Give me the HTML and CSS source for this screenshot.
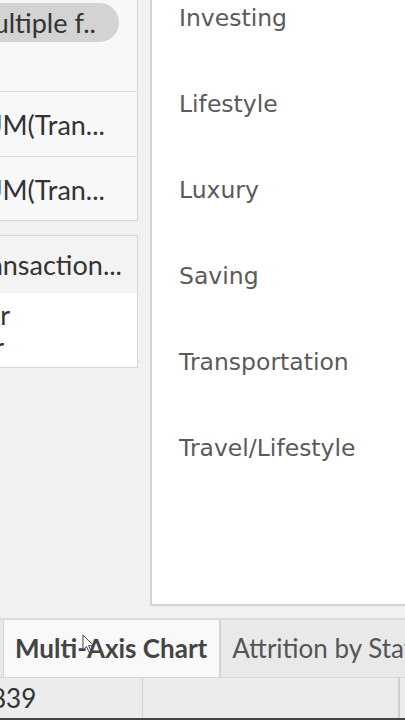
FILE: index.html
```html
<!DOCTYPE html>
<html lang="en">
<head>
    <meta charset="UTF-8">
    <meta name="viewport" content="width=device-width, initial-scale=1.0">
    <title>Multi-Axis Chart</title>
    <link rel="stylesheet" href="styles.css">
</head>
<body>
<!-- ZONA PRINCIPAL -->
<div class="principal">
    <!-- TARJETAS DE LA IZQUIERDA (marcas) -->
    <div class="lateral">
        <div class="tarjeta marcas">
            <div class="fila-pill">
                <span class="pill">Multiple f..</span>
            </div>
            <div class="fila">SUM(Tran...</div>
            <div class="fila ultima">SUM(Tran...</div>
        </div>

        <div class="tarjeta leyenda">
            <div class="cabecera">Transaction...</div>
            <div class="cuerpo">
                <span>Other</span>
                <span class="corta">Other</span>
            </div>
        </div>
    </div>

    <!-- VISTA -->
    <div class="vista">
        <ul class="categorias">
            <li>Investing</li>
            <li>Lifestyle</li>
            <li>Luxury</li>
            <li>Saving</li>
            <li>Transportation</li>
            <li>Travel/Lifestyle</li>
        </ul>
    </div>
</div>

<!-- PESTAÑAS -->
<div class="pestanas">
    <div class="pestana activa">Multi-Axis Chart</div>
    <div class="pestana">Attrition by State</div>
    <svg class="cursor" width="14" height="20" viewBox="0 0 14 20">
        <path d="M1 1 L1 16 L4.5 12.5 L7 18 L9 17 L6.6 11.6 L11.5 11.6 Z" fill="#fff" stroke="#444" stroke-width="1"/>
    </svg>
</div>

<!-- BARRA DE ESTADO -->
<div class="estado">
    <div class="celda primera">1,839</div>
    <div class="celda segunda"></div>
    <div class="celda"></div>
</div>
</body>
</html>
```
FILE: styles.css
```css
body{
    margin: 0;
    width: 405px;
    height: 720px;
    overflow: hidden;
    background-color: #f1f1f1;
    font-family: "Lato", "Liberation Sans", sans-serif;
    color: #333;
}

.principal{
    display: flex;
    height: 618px;
}

/* tarjetas izquierda */
.lateral{
    width: 220px;
    margin-left: -82px;
    display: flex;
    flex-direction: column;
    row-gap: 14px;
    flex-shrink: 0;
}

.tarjeta{
    background-color: #f8f8f8;
    border: 1px solid #d6d6d6;
    border-top: none;
    font-size: 27px;
    text-align: right;
    white-space: nowrap;
}

.marcas{
    height: 220px;
    display: flex;
    flex-direction: column;
}

.fila-pill{
    height: 92px;
    border-bottom: 1px solid #dcdcdc;
    box-sizing: border-box;
    padding-top: 3px;
    padding-right: 19px;
}

.pill{
    display: inline-block;
    width: 200px;
    height: 39px;
    line-height: 39px;
    padding-right: 23px;
    box-sizing: border-box;
    background-color: #d3d3d3;
    border-radius: 20px;
    color: #333;
}

.fila{
    height: 65px;
    line-height: 65px;
    padding-right: 32px;
    border-bottom: 1px solid #dcdcdc;
    box-sizing: border-box;
}

.fila.ultima{
    border-bottom: none;
    height: 63px;
}

.leyenda{
    border-top: 1px solid #d6d6d6;
    height: 133px;
    box-sizing: border-box;
}

.cabecera{
    height: 57px;
    line-height: 57px;
    padding-right: 15px;
    background-color: #f3f3f3;
}

.cuerpo{
    background-color: #fff;
    height: 74px;
    display: flex;
    flex-direction: column;
    padding-top: 6px;
    padding-right: 127px;
    box-sizing: border-box;
    line-height: 32px;
}

.corta{
    margin-right: 6px;
}

/* vista */
.vista{
    flex: 1;
    margin-left: 12px;
    height: 606px;
    background-color: #fff;
    border-left: 2px solid #d2d2d2;
    border-bottom: 2px solid #d2d2d2;
    box-sizing: border-box;
    overflow: hidden;
}

.categorias{
    list-style: none;
    margin: -25px 0 0 0;
    padding: 0 0 0 27px;
    font-family: "DejaVu Sans", sans-serif;
    font-size: 23.5px;
    color: #5a5a5a;
}

.categorias li{
    height: 86px;
    line-height: 86px;
}

/* pestañas */
.pestanas{
    position: relative;
    height: 59px;
    display: flex;
    background-color: #e9e9e9;
    border-top: 2px solid #dadada;
    box-sizing: border-box;
    padding-left: 3px;
}

.pestana{
    padding: 0 12px 0 11px;
    line-height: 57px;
    font-size: 26px;
    color: #555;
    white-space: nowrap;
    border-left: 1px solid #d4d4d4;
}

.activa{
    background-color: #f9f9f9;
    font-weight: bold;
    color: #444;
    border-right: 1px solid #d4d4d4;
}

.cursor{
    position: absolute;
    left: 82px;
    top: 14px;
}

/* barra de estado */
.estado{
    height: 43px;
    display: flex;
    background-color: #ececec;
    border-top: 1px solid #d6d6d6;
    border-bottom: 2px solid #444;
    box-sizing: border-box;
    font-size: 26px;
}

.celda{
    line-height: 40px;
    border-right: 1px solid #cfcfcf;
    white-space: nowrap;
}

.primera{
    width: 172px;
    margin-left: -30px;
    flex-shrink: 0;
}

.segunda{
    width: 255px;
    flex-shrink: 0;
}
```
